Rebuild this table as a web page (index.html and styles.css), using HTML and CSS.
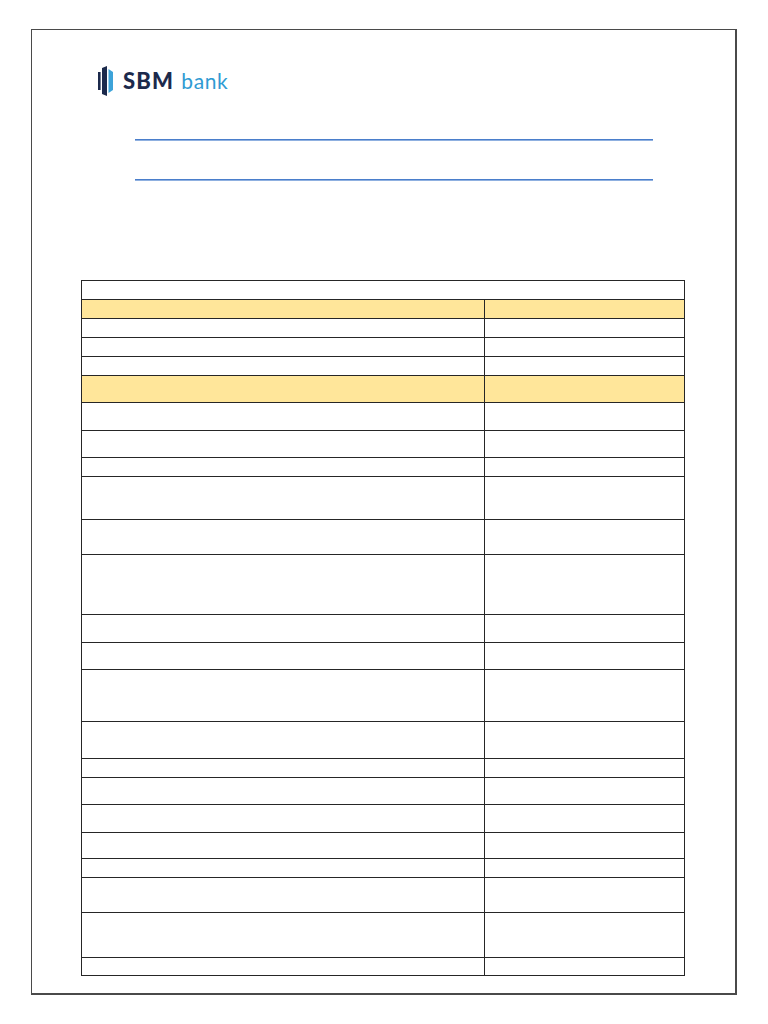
FILE: index.html
```html
<!DOCTYPE html>
<html>
<head>
<meta charset="utf-8">
<link rel="stylesheet" href="styles.css">
</head>
<body>
<div class="frame">
  <div class="logo">
    <svg class="logo-icon" width="18" height="30" viewBox="0 0 18 30">
      <rect x="0" y="6" width="2.6" height="18" fill="#1c2a4c"/>
      <polygon points="4,2 9,0 9,30 4,28" fill="#1c2a4c"/>
      <polygon points="10.5,3 15,6 15,24 10.5,27" fill="#3da3d9"/>
    </svg>
    <span class="logo-sbm">SBM</span>
    <span class="logo-bank">bank</span>
  </div>
  <div class="rule rule-1"></div>
  <div class="rule rule-2"></div>
  <table class="grid">
    <colgroup>
      <col class="col-left">
      <col class="col-right">
    </colgroup>
    <tr class="h19"><td colspan="2"></td></tr>
    <tr class="h19 yellow"><td></td><td></td></tr>
    <tr class="h19"><td></td><td></td></tr>
    <tr class="h19"><td></td><td></td></tr>
    <tr class="h19"><td></td><td></td></tr>
    <tr class="h27 yellow"><td></td><td></td></tr>
    <tr class="h28"><td></td><td></td></tr>
    <tr class="h27"><td></td><td></td></tr>
    <tr class="h19"><td></td><td></td></tr>
    <tr class="h43"><td></td><td></td></tr>
    <tr class="h35"><td></td><td></td></tr>
    <tr class="h60"><td></td><td></td></tr>
    <tr class="h28"><td></td><td></td></tr>
    <tr class="h27"><td></td><td></td></tr>
    <tr class="h52"><td></td><td></td></tr>
    <tr class="h37"><td></td><td></td></tr>
    <tr class="h19"><td></td><td></td></tr>
    <tr class="h27"><td></td><td></td></tr>
    <tr class="h28"><td></td><td></td></tr>
    <tr class="h26"><td></td><td></td></tr>
    <tr class="h19"><td></td><td></td></tr>
    <tr class="h35"><td></td><td></td></tr>
    <tr class="h45"><td></td><td></td></tr>
    <tr class="h18"><td></td><td></td></tr>
  </table>
</div>
</body>
</html>
```
FILE: styles.css
```css
html, body {
  margin: 0;
  padding: 0;
  background: #ffffff;
}
body {
  font-family: "Lato", "Liberation Sans", sans-serif;
}
.frame {
  box-sizing: border-box;
  margin: 29px 0 0 31px;
  width: 706px;
  height: 966px;
  border: 1px solid #4a4a4a;
  border-right-width: 2px;
  border-bottom-width: 2px;
  padding-top: 36px;
}
.logo {
  display: flex;
  align-items: center;
  margin-left: 66px;
  height: 30px;
}
.logo-icon {
  display: block;
  margin-right: 7px;
}
.logo-sbm {
  font-family: "Lato", "Liberation Sans", sans-serif;
  font-weight: 900;
  font-size: 22px;
  color: #1c2a4c;
  letter-spacing: 1.2px;
  line-height: 30px;
}
.logo-bank {
  font-family: "Lato", "Liberation Sans", sans-serif;
  font-weight: 400;
  font-size: 21px;
  color: #2f9bd3;
  margin-left: 7px;
  line-height: 30px;
  letter-spacing: 0.6px;
}
.rule {
  margin-left: 103px;
  width: 518px;
  height: 1px;
  background: #4a7ecb;
  border-bottom: 1px solid #8fb0e0;
}
.rule-1 {
  margin-top: 43px;
}
.rule-2 {
  margin-top: 38px;
}
.grid {
  margin-top: 99px;
  margin-left: 49px;
  width: 603px;
  border-collapse: collapse;
  table-layout: fixed;
}
.col-left {
  width: 403px;
}
.col-right {
  width: 200px;
}
.grid td {
  border: 1.5px solid #262626;
  padding: 0;
}
.yellow td {
  background: #ffe69a;
}
.h18 { height: 18px; }
.h19 { height: 19px; }
.h26 { height: 26px; }
.h27 { height: 27px; }
.h28 { height: 28px; }
.h35 { height: 35px; }
.h37 { height: 37px; }
.h43 { height: 43px; }
.h45 { height: 45px; }
.h52 { height: 52px; }
.h60 { height: 60px; }
```
